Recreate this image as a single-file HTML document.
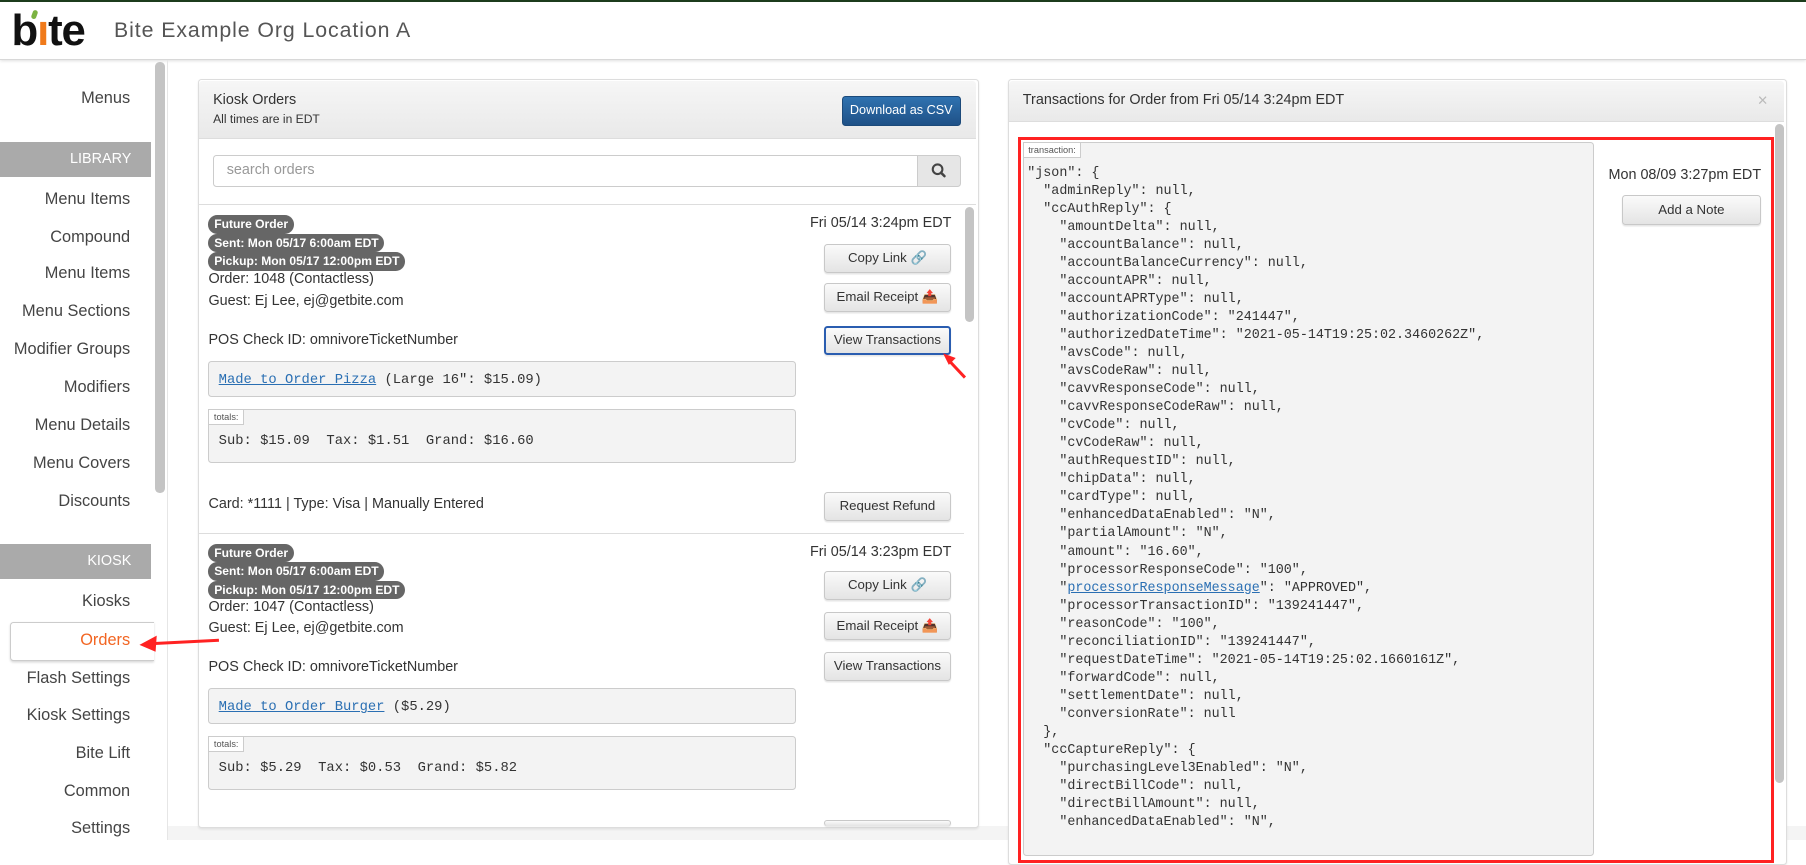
<!DOCTYPE html>
<html><head><meta charset="utf-8">
<style>
html,body{margin:0;padding:0;}
body{width:1568px;height:729px;overflow:hidden;zoom:1.1518;font-family:"Liberation Sans",Arial,sans-serif;background:#fff;position:relative;color:#333}
.abs{position:absolute}
.topbar{left:0;top:0;width:1568px;height:2px;background:#1d3d1d}
.header{left:0;top:2px;width:1568px;height:49px;background:#fff;border-bottom:1px solid #d8d8d8;box-shadow:0 1px 3px rgba(0,0,0,.15)}
.logo{left:10px;top:5px;font-size:38px;font-weight:bold;letter-spacing:-1px;color:#111}
.title{left:99px;top:16px;font-size:18.5px;color:#555;letter-spacing:.8px}
.side a{position:absolute;right:1455px;font-size:14.2px;color:#444;white-space:nowrap;text-decoration:none}
.band{position:absolute;left:0;width:131px;height:31px;background:#aaa;color:#fff;font-size:12.5px;text-align:right;box-sizing:border-box;padding-right:17px;line-height:31px}
.sb{left:135px;top:54px;width:8px;height:374px;background:#c4c4c4;border-radius:4px}
.sline{left:145px;top:52px;width:1px;height:677px;background:#e6e6e6}
.panel{background:#fff;border:1px solid #ddd;border-radius:3px;box-shadow:0 1px 2px rgba(0,0,0,.08)}
.ph{background:linear-gradient(#f6f6f6,#e9e9e9);border-bottom:1px solid #ddd}
.btn{position:absolute;box-sizing:border-box;border:1px solid #c8c8c8;border-radius:3px;background:linear-gradient(#fafafa,#e4e4e4);font-size:11.5px;color:#333;text-align:center;box-shadow:0 1px 1px rgba(0,0,0,.1)}
.badge{position:absolute;left:181px;height:16px;line-height:16px;background:#666;color:#fff;font-weight:bold;font-size:10.5px;border-radius:8px;padding:0 5px}
.t13{position:absolute;font-size:12.5px;color:#333;white-space:nowrap}
.box{position:absolute;left:181px;width:510px;background:#f3f3f3;border:1px solid #ccc;border-radius:3px;box-sizing:border-box}
.mono{font-family:"Liberation Mono",monospace;font-size:12px;color:#333}
.lbl{position:absolute;left:-1px;top:-1px;background:#fff;border:1px solid #ccc;font-size:8px;color:#555;padding:2px 4px}
a.l{color:#2a6fb3;text-decoration:underline}
pre{margin:0;font-family:"Liberation Mono",monospace;font-size:11.6px;line-height:15.67px;color:#333}
</style></head><body>
<div class="abs topbar"></div>
<div class="abs header"></div>
<div class="abs logo">b<span style="color:#f07a1a">ı</span>te</div>
<div class="abs" style="left:28px;top:9px;width:4px;height:8px;background:#7cb342;border-radius:2px;transform:rotate(20deg)"></div>
<div class="abs title">Bite Example Org Location A</div>

<div class="side">
<a style="top:77px">Menus</a>
<div class="band" style="top:123px">LIBRARY</div>
<a style="top:165px">Menu Items</a>
<a style="top:198px">Compound</a>
<a style="top:229px">Menu Items</a>
<a style="top:262px">Menu Sections</a>
<a style="top:295px">Modifier Groups</a>
<a style="top:328px">Modifiers</a>
<a style="top:361px">Menu Details</a>
<a style="top:394px">Menu Covers</a>
<a style="top:427px">Discounts</a>
<div class="band" style="top:472px">KIOSK</div>
<a style="top:514px">Kiosks</a>
<div class="abs" style="left:9px;top:540px;width:124px;height:32px;border:1px solid #ccc;border-right:none;border-radius:3px 0 0 3px;background:#fff;box-shadow:0 1px 2px rgba(0,0,0,.15)"></div>
<a style="top:548px;color:#f26522">Orders</a>
<a style="top:581px">Flash Settings</a>
<a style="top:613px">Kiosk Settings</a>
<a style="top:646px">Bite Lift</a>
<a style="top:679px">Common</a>
<a style="top:711px">Settings</a>
</div>
<div class="abs sb"></div>
<div class="abs sline"></div>
<div class="abs" style="left:146px;top:717px;width:1422px;height:12px;background:#f4f4f4"></div>

<!-- left panel -->
<div class="abs panel" style="left:172px;top:69px;width:676px;height:648px"></div>
<div class="abs ph" style="left:173px;top:70px;width:674px;height:50px;border-radius:3px 3px 0 0"></div>
<div class="t13" style="left:185px;top:80px">Kiosk Orders</div>
<div class="abs" style="left:185px;top:97px;font-size:10.5px;color:#333">All times are in EDT</div>
<div class="abs" style="left:731px;top:83px;width:103px;height:26px;background:linear-gradient(#2f72b0,#1f5187);border:1px solid #1c4a7a;border-radius:3px;box-sizing:border-box;color:#fff;font-size:11px;text-align:center;line-height:24px">Download as CSV</div>
<div class="abs" style="left:185px;top:135px;width:612px;height:27px;border:1px solid #ccc;border-radius:3px 0 0 3px;box-sizing:border-box;font-size:12.5px;color:#999;padding-left:11px;line-height:25px">search orders</div>
<div class="abs" style="left:796px;top:135px;width:38px;height:27px;background:#e6e6e6;border:1px solid #ccc;border-radius:0 3px 3px 0;box-sizing:border-box">
<svg width="36" height="25" viewBox="0 0 36 25"><circle cx="17" cy="11.5" r="4.2" fill="none" stroke="#444" stroke-width="1.8"/><path d="M20 14.5 L23 17.5" stroke="#444" stroke-width="2.2" stroke-linecap="round"/></svg></div>
<div class="abs" style="left:173px;top:177px;width:674px;height:1px;background:#ddd"></div>
<div class="abs" style="left:838px;top:180px;width:8px;height:100px;background:#c4c4c4;border-radius:4px"></div>

<!-- order 1 -->
<div class="badge" style="top:187px">Future Order</div>
<div class="badge" style="top:203px">Sent: Mon 05/17 6:00am EDT</div>
<div class="badge" style="top:219px">Pickup: Mon 05/17 12:00pm EDT</div>
<div class="t13" style="left:181px;top:235px">Order: 1048 (Contactless)</div>
<div class="t13" style="left:181px;top:254px">Guest: Ej Lee, ej@getbite.com</div>
<div class="t13" style="left:181px;top:288px">POS Check ID: omnivoreTicketNumber</div>
<div class="box" style="top:313px;height:32px"><div class="mono" style="position:absolute;left:8px;top:9px"><a class="l">Made to Order Pizza</a> (Large 16": $15.09)</div></div>
<div class="box" style="top:355px;height:47px"><div class="lbl">totals:</div><div class="mono" style="position:absolute;left:8px;top:20px;white-space:pre">Sub: $15.09  Tax: $1.51  Grand: $16.60</div></div>
<div class="t13" style="right:742px;top:187px">Fri 05/14 3:24pm EDT</div>
<div class="btn" style="left:715px;top:212px;width:111px;height:25px;line-height:23px">Copy Link 🔗</div>
<div class="btn" style="left:715px;top:246px;width:111px;height:25px;line-height:23px">Email Receipt 📤</div>
<div class="btn" style="left:715px;top:283px;width:111px;height:25px;line-height:21px;border:2px solid #2a5db0">View Transactions</div>
<svg class="abs" style="left:812px;top:298px" width="34" height="34"><path d="M26 30 L11 14" stroke="#f22" stroke-width="2.6"/><path d="M7 9 L18 13 L12 19 Z" fill="#f22"/></svg>
<div class="t13" style="left:181px;top:431px">Card: *1111 | Type: Visa | Manually Entered</div>
<div class="btn" style="left:715px;top:427px;width:111px;height:25px;line-height:23px">Request Refund</div>
<div class="abs" style="left:173px;top:463px;width:664px;height:1px;background:#ddd"></div>

<!-- order 2 -->
<div class="badge" style="top:472px">Future Order</div>
<div class="badge" style="top:488px">Sent: Mon 05/17 6:00am EDT</div>
<div class="badge" style="top:504px">Pickup: Mon 05/17 12:00pm EDT</div>
<div class="t13" style="left:181px;top:520px">Order: 1047 (Contactless)</div>
<div class="t13" style="left:181px;top:538px">Guest: Ej Lee, ej@getbite.com</div>
<div class="t13" style="left:181px;top:572px">POS Check ID: omnivoreTicketNumber</div>
<div class="box" style="top:597px;height:32px"><div class="mono" style="position:absolute;left:8px;top:9px"><a class="l">Made to Order Burger</a> ($5.29)</div></div>
<div class="box" style="top:639px;height:47px"><div class="lbl">totals:</div><div class="mono" style="position:absolute;left:8px;top:20px;white-space:pre">Sub: $5.29  Tax: $0.53  Grand: $5.82</div></div>
<div class="t13" style="right:742px;top:472px">Fri 05/14 3:23pm EDT</div>
<div class="btn" style="left:715px;top:496px;width:111px;height:25px;line-height:23px">Copy Link 🔗</div>
<div class="btn" style="left:715px;top:531px;width:111px;height:25px;line-height:23px">Email Receipt 📤</div>
<div class="btn" style="left:715px;top:566px;width:111px;height:25px;line-height:23px">View Transactions</div>
<div class="btn" style="left:715px;top:712px;width:111px;height:5px;border-bottom:none"></div>
<svg class="abs" style="left:118px;top:548px" width="75" height="20"><path d="M72 8 L14 11" stroke="#f22" stroke-width="2.6"/><path d="M3 12 L18 4 L17 18 Z" fill="#f22"/></svg>

<!-- right panel -->
<div class="abs panel" style="left:875px;top:69px;width:675px;height:680px"></div>
<div class="abs ph" style="left:876px;top:70px;width:673px;height:35px;border-radius:3px 3px 0 0"></div>
<div class="t13" style="left:888px;top:80px">Transactions for Order from Fri 05/14 3:24pm EDT</div>
<div class="abs" style="left:1526px;top:78px;font-size:15px;color:#bbb">×</div>
<div class="abs" style="left:1541px;top:108px;width:8px;height:572px;background:#c4c4c4;border-radius:4px"></div>
<div class="abs" style="left:888px;top:123px;width:496px;height:620px;background:#f3f3f3;border:1px solid #ccc;border-radius:3px;box-sizing:border-box">
<div class="lbl">transaction:</div>
<pre style="position:absolute;left:3px;top:19px">"json": {
  "adminReply": null,
  "ccAuthReply": {
    "amountDelta": null,
    "accountBalance": null,
    "accountBalanceCurrency": null,
    "accountAPR": null,
    "accountAPRType": null,
    "authorizationCode": "241447",
    "authorizedDateTime": "2021-05-14T19:25:02.3460262Z",
    "avsCode": null,
    "avsCodeRaw": null,
    "cavvResponseCode": null,
    "cavvResponseCodeRaw": null,
    "cvCode": null,
    "cvCodeRaw": null,
    "authRequestID": null,
    "chipData": null,
    "cardType": null,
    "enhancedDataEnabled": "N",
    "partialAmount": "N",
    "amount": "16.60",
    "processorResponseCode": "100",
    "<a class="l">processorResponseMessage</a>": "APPROVED",
    "processorTransactionID": "139241447",
    "reasonCode": "100",
    "reconciliationID": "139241447",
    "requestDateTime": "2021-05-14T19:25:02.1660161Z",
    "forwardCode": null,
    "settlementDate": null,
    "conversionRate": null
  },
  "ccCaptureReply": {
    "purchasingLevel3Enabled": "N",
    "directBillCode": null,
    "directBillAmount": null,
    "enhancedDataEnabled": "N",</pre>
</div>
<div class="t13" style="right:39px;top:145px">Mon 08/09 3:27pm EDT</div>
<div class="btn" style="left:1408px;top:169px;width:121px;height:26px;line-height:24px">Add a Note</div>
<div class="abs" style="left:884px;top:119px;width:656px;height:630px;border:3px solid #f22;box-sizing:border-box"></div>
</body></html>
